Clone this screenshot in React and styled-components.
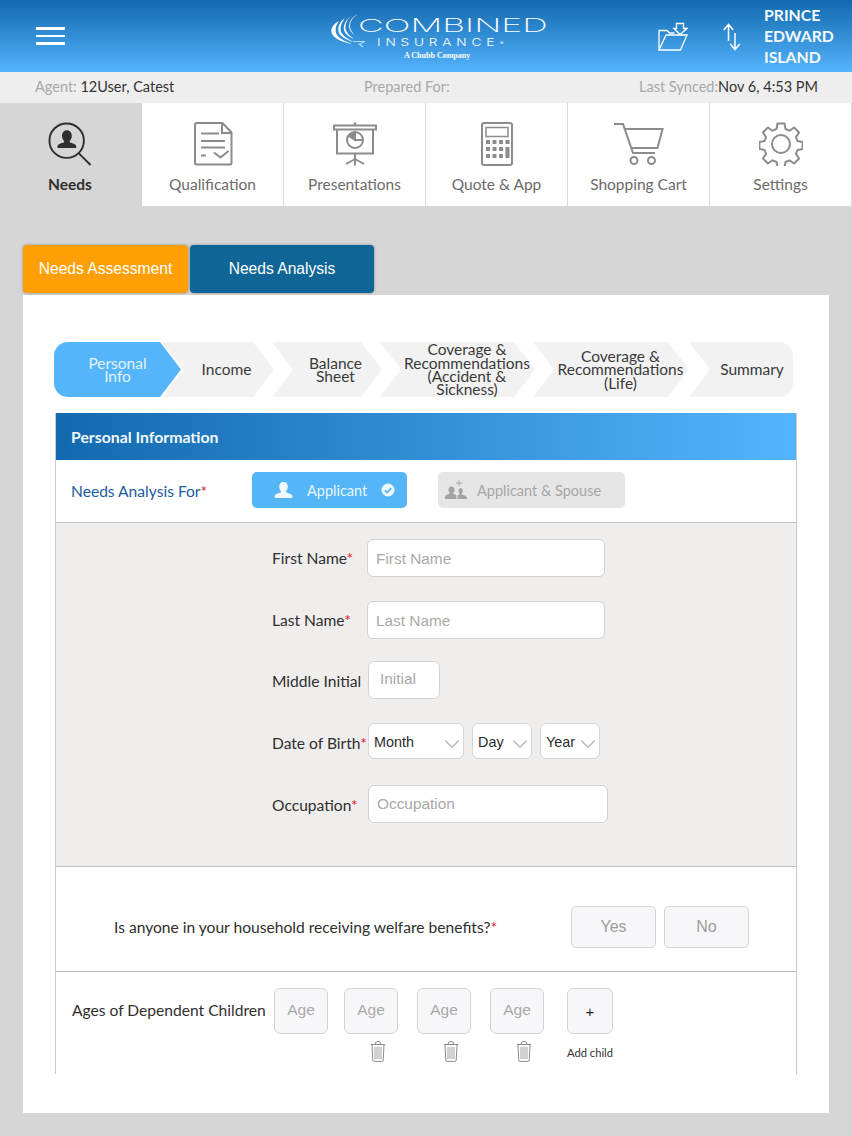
import React from 'react'
import styled, { createGlobalStyle } from 'styled-components'
import { ChevronDown } from 'lucide-react'

const Global = createGlobalStyle`
  html, body { margin: 0; padding: 0; background: #d6d6d6; }
  body { font-family: Lato, "Open Sans", sans-serif; width: 852px; height: 1136px; overflow: hidden; }
  * { box-sizing: border-box; }
`

const Page = styled.div`
  width: 852px;
  height: 1136px;
  background: #d6d6d6;
  display: flex;
  flex-direction: column;
`

const Header = styled.header`
  height: 72px;
  flex: none;
  background: linear-gradient(180deg, #1269ae 0%, #54b3fc 100%);
  display: flex;
  align-items: center;
  position: relative;
`

const Burger = styled.div`
  width: 29px;
  margin-left: 36px;
  display: flex;
  flex-direction: column;
  gap: 5px;
  span { height: 2.7px; background: #fff; display: block; }
`

const LogoWrap = styled.div`
  position: absolute;
  left: 330px;
  top: 12px;
  width: 216px;
  height: 48px;
`

const LogoWord = styled.div`
  position: absolute;
  left: ${p => p.$x}px;
  top: ${p => p.$y}px;
  color: #fff;
  white-space: nowrap;
  line-height: 1;
  font-family: ${p => p.$serif ? '"Liberation Serif", serif' : 'Inter, "Liberation Sans", sans-serif'};
  font-size: ${p => p.$size}px;
  letter-spacing: ${p => p.$track}px;
  font-weight: ${p => p.$weight || 400};
  transform-origin: left top;
  transform: scaleX(${p => p.$sx || 1});
`

const HeaderRight = styled.div`
  margin-left: auto;
  display: flex;
  align-items: center;
`

const FolderBtn = styled.div`
  width: 30px;
  height: 30px;
  margin-right: 35px;
  margin-top: 1px;
`

const ArrowsBtn = styled.div`
  width: 18px;
  height: 28px;
  margin-right: 23px;
  margin-top: 1px;
`

const Province = styled.div`
  width: 88px;
  margin-top: -2px;
  font-weight: 700;
  font-size: 15.8px;
  line-height: 21px;
  color: #f4fafe;
`

const InfoBar = styled.div`
  height: 31px;
  flex: none;
  background: #eeeeee;
  display: grid;
  grid-template-columns: 329px 275px 1fr;
  align-items: center;
  padding: 0 0 3px 35px;
  font-size: 14.5px;
  color: #a8a8a8;
  white-space: nowrap;
  b { font-weight: 400; color: #333; }
`

const Nav = styled.nav`
  display: flex;
  height: 104px;
  flex: none;
`

const NavItem = styled.div`
  width: 142px;
  height: 104px;
  background: ${p => p.$active ? '#d6d6d6' : '#fff'};
  border-right: ${p => p.$active ? 'none' : '1px solid #d8d8d8'};
  border-bottom: ${p => p.$active ? 'none' : '1px solid #d8d8d8'};
  display: flex;
  flex-direction: column;
  align-items: center;
  padding: 19px ${p => p.$active ? 2 : 0}px 0 0;
  svg { display: block; }
`

const NavLabel = styled.div`
  margin-top: 8px;
  font-size: 15.5px;
  line-height: 20px;
  font-weight: ${p => p.$active ? 700 : 400};
  color: ${p => p.$active ? '#2f2f2f' : '#6b6b6b'};
`

const Tabs = styled.div`
  display: flex;
  gap: 2px;
  margin: 38px 0 0 23px;
`

const Tab = styled.div`
  width: ${p => p.$w}px;
  height: 48px;
  background: ${p => p.$bg};
  border-radius: 4px;
  color: #fff;
  font-family: "Liberation Sans", sans-serif;
  font-size: 15.6px;
  display: flex;
  align-items: center;
  justify-content: center;
  box-shadow: 0 0 3px rgba(0, 0, 0, 0.35);
`

const Card = styled.main`
  width: 806px;
  height: 818px;
  margin: 2px 0 0 23px;
  background: #fff;
  padding: 47px 31px 0 31px;
`

const Steps = styled.div`
  width: 739px;
  height: 55px;
  border-radius: 14px;
  overflow: hidden;
  position: relative;
`

const Step = styled.div`
  position: absolute;
  top: 0;
  left: ${p => p.$x}px;
  width: ${p => p.$w}px;
  height: 55px;
  background: ${p => p.$active ? '#54b5fa' : '#f2f2f2'};
  clip-path: ${p => p.$first
    ? 'polygon(0 0, calc(100% - 21px) 0, 100% 50%, calc(100% - 21px) 100%, 0 100%)'
    : p.$last
      ? 'polygon(0 0, 100% 0, 100% 100%, 0 100%, 21px 50%)'
      : 'polygon(0 0, calc(100% - 21px) 0, 100% 50%, calc(100% - 21px) 100%, 0 100%, 21px 50%)'};
`

const StepText = styled.div`
  position: absolute;
  top: 0;
  left: ${p => p.$x}px;
  width: ${p => p.$w}px;
  height: 55px;
  padding-top: 1px;
  display: flex;
  align-items: center;
  justify-content: center;
  text-align: center;
  font-size: 15.5px;
  line-height: 13.3px;
  color: ${p => p.$active ? '#e4f3fe' : '#3a3a3a'};
`

const Panel = styled.section`
  width: 742px;
  margin: 16px 0 0 1px;
  border-left: 1px solid #c9c9c9;
  border-right: 1px solid #c9c9c9;
`

const PanelTitle = styled.div`
  height: 47px;
  background: linear-gradient(90deg, #1269ae 0%, #54b5fc 100%);
  color: #f2f8fd;
  font-weight: 700;
  font-size: 15.8px;
  display: flex;
  align-items: center;
  padding-left: 15px;
`

const ForRow = styled.div`
  height: 63px;
  display: flex;
  align-items: center;
  padding: 0 0 2px 15px;
  border-bottom: 1px solid #bdbdbd;
`

const ForLabel = styled.div`
  width: 181px;
  color: #1c5c9e;
  font-size: 15.6px;
  margin-top: 1px;
`

const Req = styled.span`
  color: #e0202c;
`

const Choice = styled.div`
  height: 36px;
  width: ${p => p.$w}px;
  margin-right: ${p => p.$mr || 0}px;
  border-radius: 5px;
  background: ${p => p.$on ? '#54b5f7' : '#e6e6e6'};
  color: ${p => p.$on ? '#e8f5fe' : '#a5a5a5'};
  font-size: 14.5px;
  display: flex;
  align-items: center;
  padding-left: ${p => p.$pl}px;
  gap: ${p => p.$gap}px;
`

const FormArea = styled.div`
  height: 344px;
  background: #f0eded;
  border-bottom: 1px solid #bdbdbd;
  padding-top: 16px;
  display: flex;
  flex-direction: column;
`

const FormRow = styled.div`
  height: ${p => p.$h}px;
  margin-bottom: ${p => p.$mb}px;
  display: flex;
  align-items: center;
  padding-left: 216px;
`

const FieldLabel = styled.label`
  width: ${p => p.$w || 96}px;
  flex: none;
  font-size: 15.6px;
  color: #2f2f2f;
  white-space: nowrap;
  margin-top: ${p => p.$mt || 0}px;
`

const TextBox = styled.div`
  width: ${p => p.$w}px;
  height: 38px;
  background: #fff;
  border: 1px solid #d2d2d2;
  border-radius: 6px;
  color: #a9a9a9;
  font-family: "Liberation Sans", sans-serif;
  font-size: 15.4px;
  padding: ${p => p.$pt || 1}px 0 0 ${p => p.$pl || 8}px;
  display: flex;
  align-items: ${p => p.$pt ? 'flex-start' : 'center'};
`

const SelectBox = styled.div`
  width: ${p => p.$w}px;
  height: 36px;
  background: #fff;
  border: 1px solid #d6d6d6;
  border-radius: 6px;
  color: #2b2b2b;
  font-family: "Liberation Sans", sans-serif;
  font-size: 14.4px;
  display: flex;
  align-items: center;
  padding: 1px 0 0 5px;
  margin-right: ${p => p.$mr || 0}px;
  position: relative;
  svg { position: absolute; right: -2px; top: 7px; color: #b0b0b0; }
`

const WelfareRow = styled.div`
  height: 105px;
  display: flex;
  align-items: center;
  padding: 15px 0 0 58px;
  border-bottom: 1px solid #bdbdbd;
`

const WelfareLabel = styled.div`
  width: 457px;
  font-size: 15.6px;
  color: #2f2f2f;
`

const YesNo = styled.div`
  width: 85px;
  height: 42px;
  margin-right: 8px;
  border: 1px solid #d5d5d5;
  border-radius: 5px;
  background: #f7f7f9;
  color: #9d9d9d;
  font-family: "Liberation Sans", sans-serif;
  font-size: 16px;
  display: flex;
  align-items: center;
  justify-content: center;
`

const AgesRow = styled.div`
  height: 102px;
  padding: 16px 0 0 16px;
  display: flex;
  align-items: flex-start;
`

const AgesLabel = styled.div`
  width: 202px;
  font-size: 15.6px;
  color: #2f2f2f;
  margin-top: 13px;
  white-space: nowrap;
`

const AgeCol = styled.div`
  width: ${p => p.$w}px;
  margin-right: ${p => p.$mr}px;
  display: flex;
  flex-direction: column;
  align-items: center;
`

const AgeBox = styled.div`
  width: 54px;
  height: 46px;
  border: 1px solid #d5d5d5;
  border-radius: 6px;
  background: #f7f7f9;
  color: #a9a9a9;
  font-family: "Liberation Sans", sans-serif;
  font-size: 15.5px;
  display: flex;
  align-items: center;
  justify-content: center;
  padding-bottom: 2px;
`

const AddBox = styled(AgeBox)`
  width: 46px;
  color: #222;
  font-size: 15px;
  padding: 1px 0 0;
`

const Trash = styled.div`
  margin-top: 6px;
  margin-left: ${p => p.$ml || 0}px;
  height: 24px;
`

const AddText = styled.div`
  margin-top: 12px;
  font-size: 11.2px;
  color: #333;
  white-space: nowrap;
`

function TrashIcon() {
  return (
    <svg width="16" height="22" viewBox="0 0 16 22" fill="none" stroke="#8a8a8a" strokeWidth="1">
      <path d="M.8 4.500h14.400M5 4.400q0-3 3-3t3 3" />
      <path d="M2 5l.8 15.200q.1 1.200 1.300 1.200h7.800q1.200 0 1.300-1.200L14 5" />
      <path d="M5 7v12M7 7v12M9 7v12M11 7v12" strokeWidth=".8" />
    </svg>
  )
}

const grey = '#8c8c8c'

function NeedsIcon() {
  return (
    <svg width="44" height="44" viewBox="0 0 46 46" fill="none">
      <circle cx="19.500" cy="19.500" r="18" stroke="#2f2f2f" strokeWidth="2" />
      <path d="M31.500 32l13 13" stroke="#2f2f2f" strokeWidth="2" />
      <path d="M19.500 8.500c3.400 0 5.400 2.600 5.400 6 0 2.400-1 4.200-2.200 5.400v1.200c2.800 1.200 6.600 1.600 7 4.600.1 1.200-.6 1.600-1.600 1.600H11.400c-1 0-1.700-.4-1.600-1.600.4-3 4.200-3.400 7-4.600v-1.200c-1.200-1.200-2.200-3-2.200-5.400 0-3.400 2-6 4.900-6z" fill="#2f2f2f" />
    </svg>
  )
}

function QualIcon() {
  return (
    <svg width="40" height="44" viewBox="0 0 40 44" fill="none" stroke={grey} strokeWidth="2">
      <path d="M3.500 1h26l9 9.500V41q0 1.500-1.500 1.500H3.500Q2 42.500 2 41V2.500Q2 1 3.500 1z" />
      <path d="M29 1.500v9.500h9" />
      <path d="M8 11.500h18M8 19h24M8 25.500h24M8 33.500h5" />
      <path d="M21 30.500l6.500 5 8-6.500" />
    </svg>
  )
}

function PresIcon() {
  return (
    <svg width="44" height="44" viewBox="0 0 44 44" fill="none" stroke={grey} strokeWidth="2">
      <path d="M1 3.500h42v4H1z" />
      <path d="M22 .5v3" strokeWidth="2.500" />
      <path d="M4 7.500v24h36v-24" />
      <circle cx="22" cy="18" r="8" />
      <path d="M22 10.500V18h7.500" />
      <path d="M22 10.500l-6 3.500 6 4z" fill={grey} />
      <path d="M22 31.500v12M22 37l-9 5M22 37l9 5" />
    </svg>
  )
}

function CalcIcon() {
  const keys = []
  for (let r = 0; r < 3; r++) {
    for (let c = 0; c < 4; c++) {
      if (c === 3 && r > 0) continue
      keys.push(<rect key={`${r}-${c}`} x={5 + c * 6.5} y={18 + r * 7} width="4" height="4" fill={grey} />)
    }
  }
  return (
    <svg width="32" height="44" viewBox="0 0 32 44" fill="none">
      <rect x="1" y="1" width="30" height="42" rx="2" stroke={grey} strokeWidth="2" />
      <rect x="5" y="5.500" width="22" height="9" stroke={grey} strokeWidth="1.500" />
      {keys}
      <rect x="24.500" y="25" width="4" height="11" fill={grey} />
    </svg>
  )
}

function CartIcon() {
  return (
    <svg width="50" height="44" viewBox="0 0 50 44" fill="none" stroke={grey} strokeWidth="2">
      <path d="M0 2h9l10 29h22" />
      <path d="M11 7h37.500l-5 19H17" />
      <circle cx="20" cy="38.500" r="3.500" />
      <circle cx="37.500" cy="38.500" r="3.500" />
    </svg>
  )
}

function GearIcon() {
  return (
    <svg width="44" height="44" viewBox="0 0 44 44" fill="none" stroke={grey} strokeWidth="2" strokeLinejoin="round">
      <path d="M18.500 1.500h7l1 5.500 4 1.700 4.600-3.200 5 5-3.200 4.600 1.700 4 5 1v6.800l-5 1-1.700 4 3.200 4.600-5 5-4.600-3.200-4 1.700-1 5.500h-7l-1-5.500-4-1.700-4.600 3.200-5-5 3.200-4.600-1.700-4-5-1v-6.800l5-1 1.700-4-3.200-4.600 5-5 4.600 3.200 4-1.700z" />
      <circle cx="22" cy="22" r="9" />
    </svg>
  )
}

function PersonIcon() {
  return (
    <svg width="19" height="17" viewBox="0 0 19 17" fill="#f2f9fe">
      <path d="M9.500 0c2.800 0 4.300 2 4.300 4.700 0 1.900-.8 3.500-1.800 4.500v1.100c2.400 1 6 1.500 6.500 4.300.1 1-.3 1.400-1.200 1.400H1.700c-.9 0-1.300-.4-1.200-1.400.5-2.800 4.100-3.300 6.500-4.300V9.200C6 8.200 5.200 6.600 5.200 4.700 5.200 2 6.700 0 9.500 0z" />
    </svg>
  )
}

function CheckBadge() {
  return (
    <svg width="14" height="14" viewBox="0 0 14 14">
      <circle cx="7" cy="7" r="6.500" fill="#eef8fe" />
      <path d="M3.800 7.200l2.300 2.300 4.200-4.300" stroke="#54b5f7" strokeWidth="1.700" fill="none" />
    </svg>
  )
}

function SpouseIcon() {
  return (
    <svg width="22" height="20" viewBox="0 0 22 20" fill="#a3a3a3">
      <path d="M13.500 0h1.200v2.500h2.500v1.200h-2.500v2.500h-1.200V3.700H11V2.500h2.500z" opacity=".75" />
      <path d="M6.500 6.500c2 0 3 1.500 3 3.300 0 1.300-.5 2.300-1.200 3v1c1.100.5 2.300.8 3.200 1.400V19H0v-2c0-1.900 2.900-2.400 4.700-3.200v-1c-.7-.7-1.200-1.700-1.200-3 0-1.800 1-3.300 3-3.300z" />
      <path d="M15 8c1.800 0 2.800 1.300 2.800 3 0 1.200-.5 2.100-1.100 2.700v.9c1.800.7 4.800 1.100 5.300 3V19h-9.500v-3.500c.7-.4 1.500-.7 2.100-1v-.8c-.6-.6-1.100-1.500-1.100-2.700 0-1.700.9-3 2.500-3z" />
    </svg>
  )
}

function LogoSwoosh() {
  return (
    <svg width="36" height="34" viewBox="0 0 36 34" style={{ position: 'absolute', left: 1, top: 2 }} fill="#fff">
      <path d="M8 7C2 10-1 15 1 20c3 5 10 8 20 10-8-3-14-6-16-11C4 15 5 11 8 7z" />
      <path d="M14 4C8 8 6 14 8 19c2 4 8 7 14 9-5-3-10-6-12-10-1.500-5 1-10 4-14z" />
      <path d="M20 2c-5 4-8 9-7 14 1 4 5 7 10 9-4-3-7.500-6-8.500-10C14 10 16 6 20 2z" />
      <path d="M27 0c-5 2-9 7-9 13 .5 3 2.500 6 6 8.500-2.500-2.500-4.500-5.500-5-8.500C18.500 8 22 3 27 0z" />
      <path d="M22 27.500h12l-5 2 3 3.500-5-3.500" stroke="#fff" strokeWidth=".6" fill="none" />
    </svg>
  )
}

const steps = [
  { x: 0, w: 127, tx: 15, tw: 97, text: ['Personal', 'Info'], active: true, first: true },
  { x: 108, w: 112, tx: 128, tw: 89, text: ['Income'] },
  { x: 218, w: 110, tx: 238, tw: 87, text: ['Balance', 'Sheet'] },
  { x: 326, w: 155, tx: 346, tw: 134, text: ['Coverage &', 'Recommendations', '(Accident &', 'Sickness)'] },
  { x: 479, w: 156, tx: 499, tw: 135, text: ['Coverage &', 'Recommendations', '(Life)'] },
  { x: 635, w: 105, tx: 657, tw: 82, text: ['Summary'], last: true },
]

const navItems = [
  { label: 'Needs', icon: <NeedsIcon />, active: true },
  { label: 'Qualification', icon: <QualIcon /> },
  { label: 'Presentations', icon: <PresIcon /> },
  { label: 'Quote & App', icon: <CalcIcon /> },
  { label: 'Shopping Cart', icon: <CartIcon /> },
  { label: 'Settings', icon: <GearIcon /> },
]

export default function App() {
  return (
    <Page>
      <Global />
      <Header>
        <Burger><span /><span /><span /></Burger>
        <LogoWrap>
          <LogoSwoosh />
          <LogoWord $x={28} $y={5} $size={18} $track={0} $sx={1.97} $weight={200}>COMBINED</LogoWord>
          <LogoWord $x={47} $y={26} $size={10.5} $track={3.7} $sx={1.3} $weight={300}>INSURANCE</LogoWord>
          <LogoWord $x={170} $y={29} $size={5}>®</LogoWord>
          <LogoWord $x={74} $y={40} $size={8} $serif $weight={700}>A Chubb Company</LogoWord>
        </LogoWrap>
        <HeaderRight>
          <FolderBtn>
            <svg width="30" height="30" viewBox="0 0 30 30" fill="none" stroke="#fff" strokeWidth="1.300">
              <path d="M1 28V8.500h8l2.500 2.500h5" />
              <path d="M1 28h21.500L29 13H8L1 28z" />
              <path d="M18.500 1.500h7v5h3.500l-7 6-6-6h2.500z" />
            </svg>
          </FolderBtn>
          <ArrowsBtn>
            <svg width="18" height="28" viewBox="0 0 18 28" fill="none" stroke="#fff" strokeWidth="1.500">
              <path d="M5.500 18V1.500M.8 7l4.700-5.500L10.200 7" />
              <path d="M12 10v16.500M7.300 21l4.700 5.500 4.700-5.500" />
            </svg>
          </ArrowsBtn>
          <Province>PRINCE<br />EDWARD<br />ISLAND</Province>
        </HeaderRight>
      </Header>

      <InfoBar>
        <div>Agent: <b>12User, Catest</b></div>
        <div>Prepared For:</div>
        <div>Last Synced:<b>Nov 6, 4:53 PM</b></div>
      </InfoBar>

      <Nav>
        {navItems.map(item => (
          <NavItem key={item.label} $active={item.active}>
            {item.icon}
            <NavLabel $active={item.active}>{item.label}</NavLabel>
          </NavItem>
        ))}
      </Nav>

      <Tabs>
        <Tab $w={165} $bg="#ff9f06">Needs Assessment</Tab>
        <Tab $w={184} $bg="#0f6596">Needs Analysis</Tab>
      </Tabs>

      <Card>
        <Steps>
          {steps.map(s => (
            <Step key={s.x} $x={s.x} $w={s.w} $active={s.active} $first={s.first} $last={s.last} />
          ))}
          {steps.map(s => (
            <StepText key={s.x} $x={s.tx} $w={s.tw} $active={s.active}>
              <div>{s.text.map(line => <div key={line}>{line}</div>)}</div>
            </StepText>
          ))}
        </Steps>

        <Panel>
          <PanelTitle>Personal Information</PanelTitle>
          <ForRow>
            <ForLabel>Needs Analysis For<Req>*</Req></ForLabel>
            <Choice $on $w={155} $mr={31} $pl={22} $gap={14}>
              <PersonIcon />
              <span>Applicant</span>
              <CheckBadge />
            </Choice>
            <Choice $w={187} $pl={7} $gap={10}>
              <SpouseIcon />
              <span>Applicant &amp; Spouse</span>
            </Choice>
          </ForRow>

          <FormArea>
            <FormRow $h={38} $mb={24}>
              <FieldLabel $w={95}>First Name<Req>*</Req></FieldLabel>
              <TextBox $w={238}>First Name</TextBox>
            </FormRow>
            <FormRow $h={38} $mb={22}>
              <FieldLabel $w={95}>Last Name<Req>*</Req></FieldLabel>
              <TextBox $w={238}>Last Name</TextBox>
            </FormRow>
            <FormRow $h={38} $mb={24}>
              <FieldLabel $mt={1}>Middle Initial</FieldLabel>
              <TextBox $w={72} $pl={11} $pt={8}>Initial</TextBox>
            </FormRow>
            <FormRow $h={36} $mb={26}>
              <FieldLabel $mt={4}>Date of Birth<Req>*</Req></FieldLabel>
              <SelectBox $w={96} $mr={8}>Month<ChevronDown size={26} strokeWidth={1} /></SelectBox>
              <SelectBox $w={60} $mr={8}>Day<ChevronDown size={26} strokeWidth={1} /></SelectBox>
              <SelectBox $w={60}>Year<ChevronDown size={26} strokeWidth={1} /></SelectBox>
            </FormRow>
            <FormRow $h={38} $mb={0}>
              <FieldLabel $mt={2}>Occupation<Req>*</Req></FieldLabel>
              <TextBox $w={240} $pl={8} $pt={9}>Occupation</TextBox>
            </FormRow>
          </FormArea>

          <WelfareRow>
            <WelfareLabel>Is anyone in your household receiving welfare benefits?<Req>*</Req></WelfareLabel>
            <YesNo>Yes</YesNo>
            <YesNo>No</YesNo>
          </WelfareRow>

          <AgesRow>
            <AgesLabel>Ages of Dependent Children</AgesLabel>
            <AgeCol $w={54} $mr={16}><AgeBox>Age</AgeBox></AgeCol>
            <AgeCol $w={54} $mr={19}><AgeBox>Age</AgeBox><Trash $ml={14}><TrashIcon /></Trash></AgeCol>
            <AgeCol $w={54} $mr={19}><AgeBox>Age</AgeBox><Trash $ml={14}><TrashIcon /></Trash></AgeCol>
            <AgeCol $w={54} $mr={23}><AgeBox>Age</AgeBox><Trash $ml={14}><TrashIcon /></Trash></AgeCol>
            <AgeCol $w={46} $mr={0}><AddBox>+</AddBox><AddText>Add child</AddText></AgeCol>
          </AgesRow>
        </Panel>
      </Card>
    </Page>
  )
}
